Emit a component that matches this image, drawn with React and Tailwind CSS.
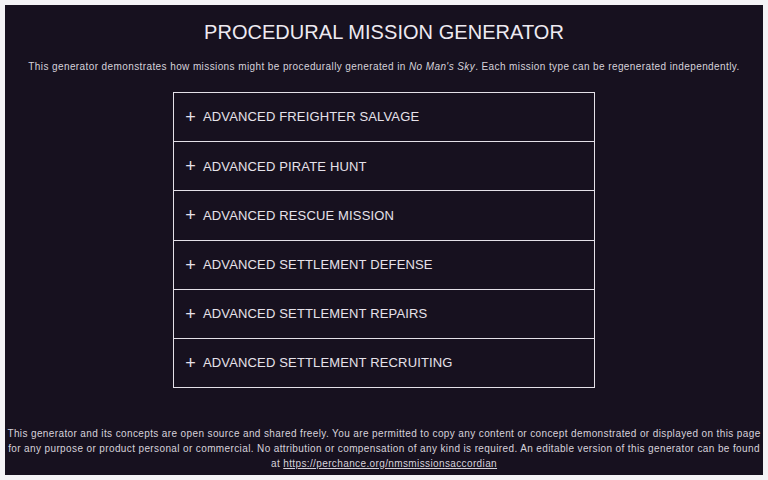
import { useState } from "react";

const missions = [
  "Advanced Freighter Salvage",
  "Advanced Pirate Hunt",
  "Advanced Rescue Mission",
  "Advanced Settlement Defense",
  "Advanced Settlement Repairs",
  "Advanced Settlement Recruiting",
];

const App = () => {
  const [open, setOpen] = useState(null);

  return (
    <div className="h-[480px] bg-[#f4f3f6] p-[5px] font-['Liberation_Sans',Arial,sans-serif]">
      <div className="h-[470px] w-[758px] bg-[#17111f] text-[#e6e2ea] flex flex-col">
        <h1 className="mt-[14px] text-center text-[20px] leading-[26px] tracking-[0.05px] uppercase text-[#eeeaf1]">
          Procedural Mission Generator
        </h1>
        <p className="mt-[15px] text-center text-[10px] leading-[14px] tracking-[0.4px] text-[#d6d2db]">
          This generator demonstrates how missions might be procedurally generated in{" "}
          <i>No Man's Sky</i>. Each mission type can be regenerated independently.
        </p>
        <div className="mt-[18px] mx-auto w-[422px] border-b border-[#e4e0e8]">
          {missions.map((m, i) => (
            <div key={i} className="border-x border-t border-[#e4e0e8]">
              <button
                className="w-full h-[48.2px] flex items-center gap-[8px] pl-[12px] text-left text-[13px] uppercase text-[#e6e2ea] tracking-[0.15px]"
                onClick={() => setOpen(open === i ? null : i)}
              >
                <span className="text-[18px] leading-none w-[9px] flex justify-center">+</span>
                <span>{m}</span>
              </button>
            </div>
          ))}
        </div>
        <footer className="mt-auto mb-[4px] text-center text-[10px] leading-[15px] tracking-[0.38px] text-[#d6d2db]">
          This generator and its concepts are open source and shared freely. You are permitted to copy any content or concept demonstrated or displayed on this page for any purpose or product personal or commercial. No attribution or compensation of any kind is required. An editable version of this generator can be found at{" "}
          <a href="#" className="underline">https://perchance.org/nmsmissionsaccordian</a>
        </footer>
      </div>
    </div>
  );
};

export default App;
